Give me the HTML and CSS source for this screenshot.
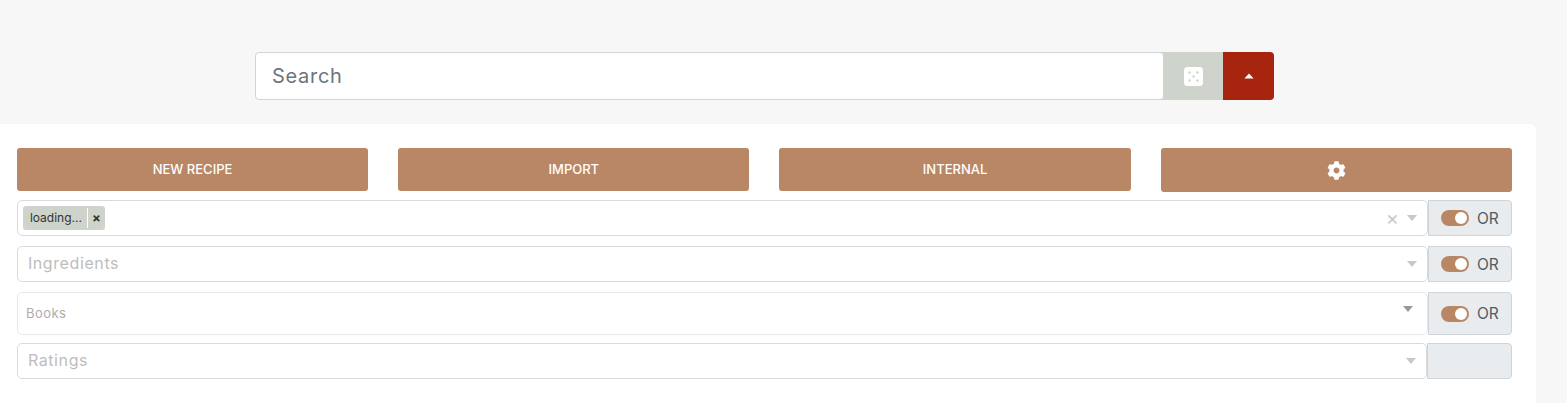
FILE: index.html
```html
<!DOCTYPE html>
<html lang="en">
<head>
<meta charset="utf-8">
<title>Recipes</title>
<link rel="stylesheet" href="styles.css">
</head>
<body>
<div class="search">
  <div class="search-input">Search</div>
  <button class="search-btn dice" type="button" aria-label="Random">
    <svg width="19" height="19" viewBox="0 0 19 19"><rect width="19" height="19" rx="3.5" fill="#fff"/><g fill="#ced3cb"><circle cx="5.5" cy="5.5" r="1.2"/><circle cx="13.5" cy="5.5" r="1.2"/><circle cx="9.5" cy="9.5" r="1.2"/><circle cx="5.5" cy="13.5" r="1.2"/><circle cx="13.5" cy="13.5" r="1.2"/></g></svg>
  </button>
  <button class="search-btn toggle" type="button" aria-label="Collapse">
    <svg width="10" height="6" viewBox="0 0 10 6"><path d="M5 0.5 9.6 5.4H0.4Z" fill="#fff"/></svg>
  </button>
</div>
<main class="card">
  <div class="actions">
    <button class="action" type="button">NEW RECIPE</button>
    <button class="action" type="button">IMPORT</button>
    <button class="action" type="button">INTERNAL</button>
    <button class="action action-icon" type="button" aria-label="Settings">
      <svg width="19" height="19" viewBox="0 0 512 512"><path fill="#fff" d="M487.4 315.7l-42.6-24.6c4.3-23.2 4.3-47 0-70.2l42.6-24.6c4.9-2.8 7.1-8.6 5.5-14-11.1-35.6-30-67.8-54.7-94.6-3.8-4.1-10-5.1-14.8-2.3L380.8 110c-17.9-15.4-38.5-27.3-60.8-35.1V25.8c0-5.6-3.9-10.5-9.4-11.7-36.7-8.2-74.3-7.8-109.2 0-5.5 1.2-9.4 6.1-9.4 11.7V75c-22.2 7.9-42.8 19.8-60.8 35.1L88.7 85.5c-4.9-2.8-11-1.9-14.8 2.3-24.7 26.7-43.6 58.9-54.7 94.6-1.7 5.4.6 11.2 5.5 14L67.3 221c-4.3 23.2-4.3 47 0 70.2l-42.6 24.6c-4.9 2.8-7.1 8.6-5.5 14 11.1 35.6 30 67.8 54.7 94.6 3.8 4.1 10 5.1 14.8 2.3l42.6-24.6c17.9 15.4 38.5 27.3 60.8 35.1v49.2c0 5.6 3.9 10.5 9.4 11.7 36.7 8.2 74.3 7.8 109.2 0 5.5-1.2 9.4-6.1 9.4-11.7v-49.2c22.2-7.9 42.8-19.8 60.8-35.1l42.6 24.6c4.9 2.8 11 1.9 14.8-2.3 24.7-26.7 43.6-58.9 54.7-94.6 1.5-5.5-.7-11.3-5.6-14.1zM256 336c-44.1 0-80-35.9-80-80s35.9-80 80-80 80 35.9 80 80-35.9 80-80 80z"/></svg>
    </button>
  </div>

  <div class="filter">
    <div class="select">
      <span class="tag"><span class="tag-label">loading...</span><span class="tag-x">×</span></span>
      <span class="clear">×</span>
      <span class="caret"></span>
    </div>
    <div class="addon"><span class="switch"></span><span class="or">OR</span></div>
  </div>

  <div class="filter">
    <div class="select">
      <span class="placeholder">Ingredients</span>
      <span class="caret"></span>
    </div>
    <div class="addon"><span class="switch"></span><span class="or">OR</span></div>
  </div>

  <div class="filter filter-books">
    <div class="select select-books">
      <span class="placeholder-small">Books</span>
      <span class="caret caret-dark"></span>
    </div>
    <div class="addon"><span class="switch"></span><span class="or">OR</span></div>
  </div>

  <div class="filter filter-ratings">
    <div class="select">
      <span class="placeholder">Ratings</span>
      <span class="caret"></span>
    </div>
    <div class="addon"></div>
  </div>
</main>
</body>
</html>
```
FILE: styles.css
```css
* { box-sizing: border-box; }

html, body { height: 100%; }

body {
  margin: 0;
  padding-top: 52px;
  background: #f7f7f7;
  font-family: "Inter", "Liberation Sans", sans-serif;
  overflow: hidden;
}

button { font-family: inherit; border: 0; cursor: pointer; }

.search {
  display: flex;
  width: 1019px;
  height: 48px;
  margin-left: 255px;
}

.search-input {
  position: relative;
  z-index: 1;
  flex: 1;
  display: flex;
  align-items: center;
  padding-left: 16px;
  background: #fff;
  border: 1px solid #ced4da;
  border-radius: 4px;
  color: #6c757d;
  font-size: 20px;
  letter-spacing: 0.7px;
}

.search-btn {
  display: flex;
  align-items: center;
  justify-content: center;
  padding: 0;
}

.dice {
  width: 63px;
  margin-left: -4px;
  padding-left: 4px;
  background: #ced3cb;
}

.toggle { width: 51px; background: #a7240e; border-radius: 0 4px 4px 0; }

.card {
  width: 1536px;
  height: 279px;
  margin-top: 24px;
  padding: 24px 24px 0 16.875px;
  background: #fff;
  border-radius: 0 6px 0 0;
}

.actions {
  display: grid;
  grid-template-columns: repeat(4, 1fr);
  column-gap: 30px;
  align-items: start;
  margin-bottom: 8px;
}

.action {
  display: flex;
  align-items: center;
  justify-content: center;
  height: 43px;
  padding: 0 0 2px;
  background: #b98766;
  border-radius: 3px;
  color: #fff;
  font-size: 13px;
  font-weight: 500;
}

.action-icon { height: 44px; padding: 0; }

.filter {
  display: flex;
  height: 36px;
  margin-bottom: 10px;
}

.filter-books { height: 43px; margin-bottom: 8px; }

.select {
  flex: 1;
  display: flex;
  align-items: center;
  min-width: 0;
  padding: 0 10px 0 5px;
  background: #fff;
  border: 1px solid #dadada;
  border-radius: 5px;
}

.select-books { border-color: #e8e8e8; padding-left: 8px; padding-right: 14px; }

.placeholder {
  margin-left: 5px;
  margin-right: auto;
  padding-bottom: 2px;
  color: #bdbdbd;
  font-size: 16px;
  letter-spacing: 0.6px;
}

.placeholder-small {
  margin-right: auto;
  padding-bottom: 2px;
  color: #adadad;
  font-size: 13px;
  letter-spacing: 0.5px;
}

.tag {
  display: flex;
  align-items: center;
  height: 24px;
  margin-right: auto;
  background: #ced3cb;
  border-radius: 3px;
  color: #333;
  font-size: 12px;
}

.tag-label {
  padding: 0 5px 0 7px;
  border-right: 1px solid #fff;
  line-height: 20px;
}

.tag-x {
  width: 17px;
  text-align: center;
  font-size: 13px;
  font-weight: 700;
}

.clear {
  margin-right: 8px;
  color: #c8c8c8;
  font-size: 20px;
  line-height: 1;
}

.caret {
  width: 0;
  height: 0;
  border-left: 5.5px solid transparent;
  border-right: 5.5px solid transparent;
  border-top: 6px solid #c8c8c8;
}

.caret-dark { border-top-color: #999; margin-bottom: 9px; }

.addon {
  display: flex;
  align-items: center;
  flex: 0 0 84px;
  padding-left: 12px;
  background: #e9ecef;
  border: 1px solid #ced4da;
  border-radius: 0 4px 4px 0;
}

.filter-ratings .addon { flex-basis: 85px; }

.switch {
  position: relative;
  width: 28px;
  height: 16px;
  margin-right: 8px;
  background: #b98766;
  border-radius: 8px;
}

.switch::after {
  content: "";
  position: absolute;
  top: 2px;
  right: 2px;
  width: 12px;
  height: 12px;
  background: #fff;
  border-radius: 50%;
}

.or {
  color: #555b62;
  font-size: 15.5px;
  font-weight: 400;
}
```
